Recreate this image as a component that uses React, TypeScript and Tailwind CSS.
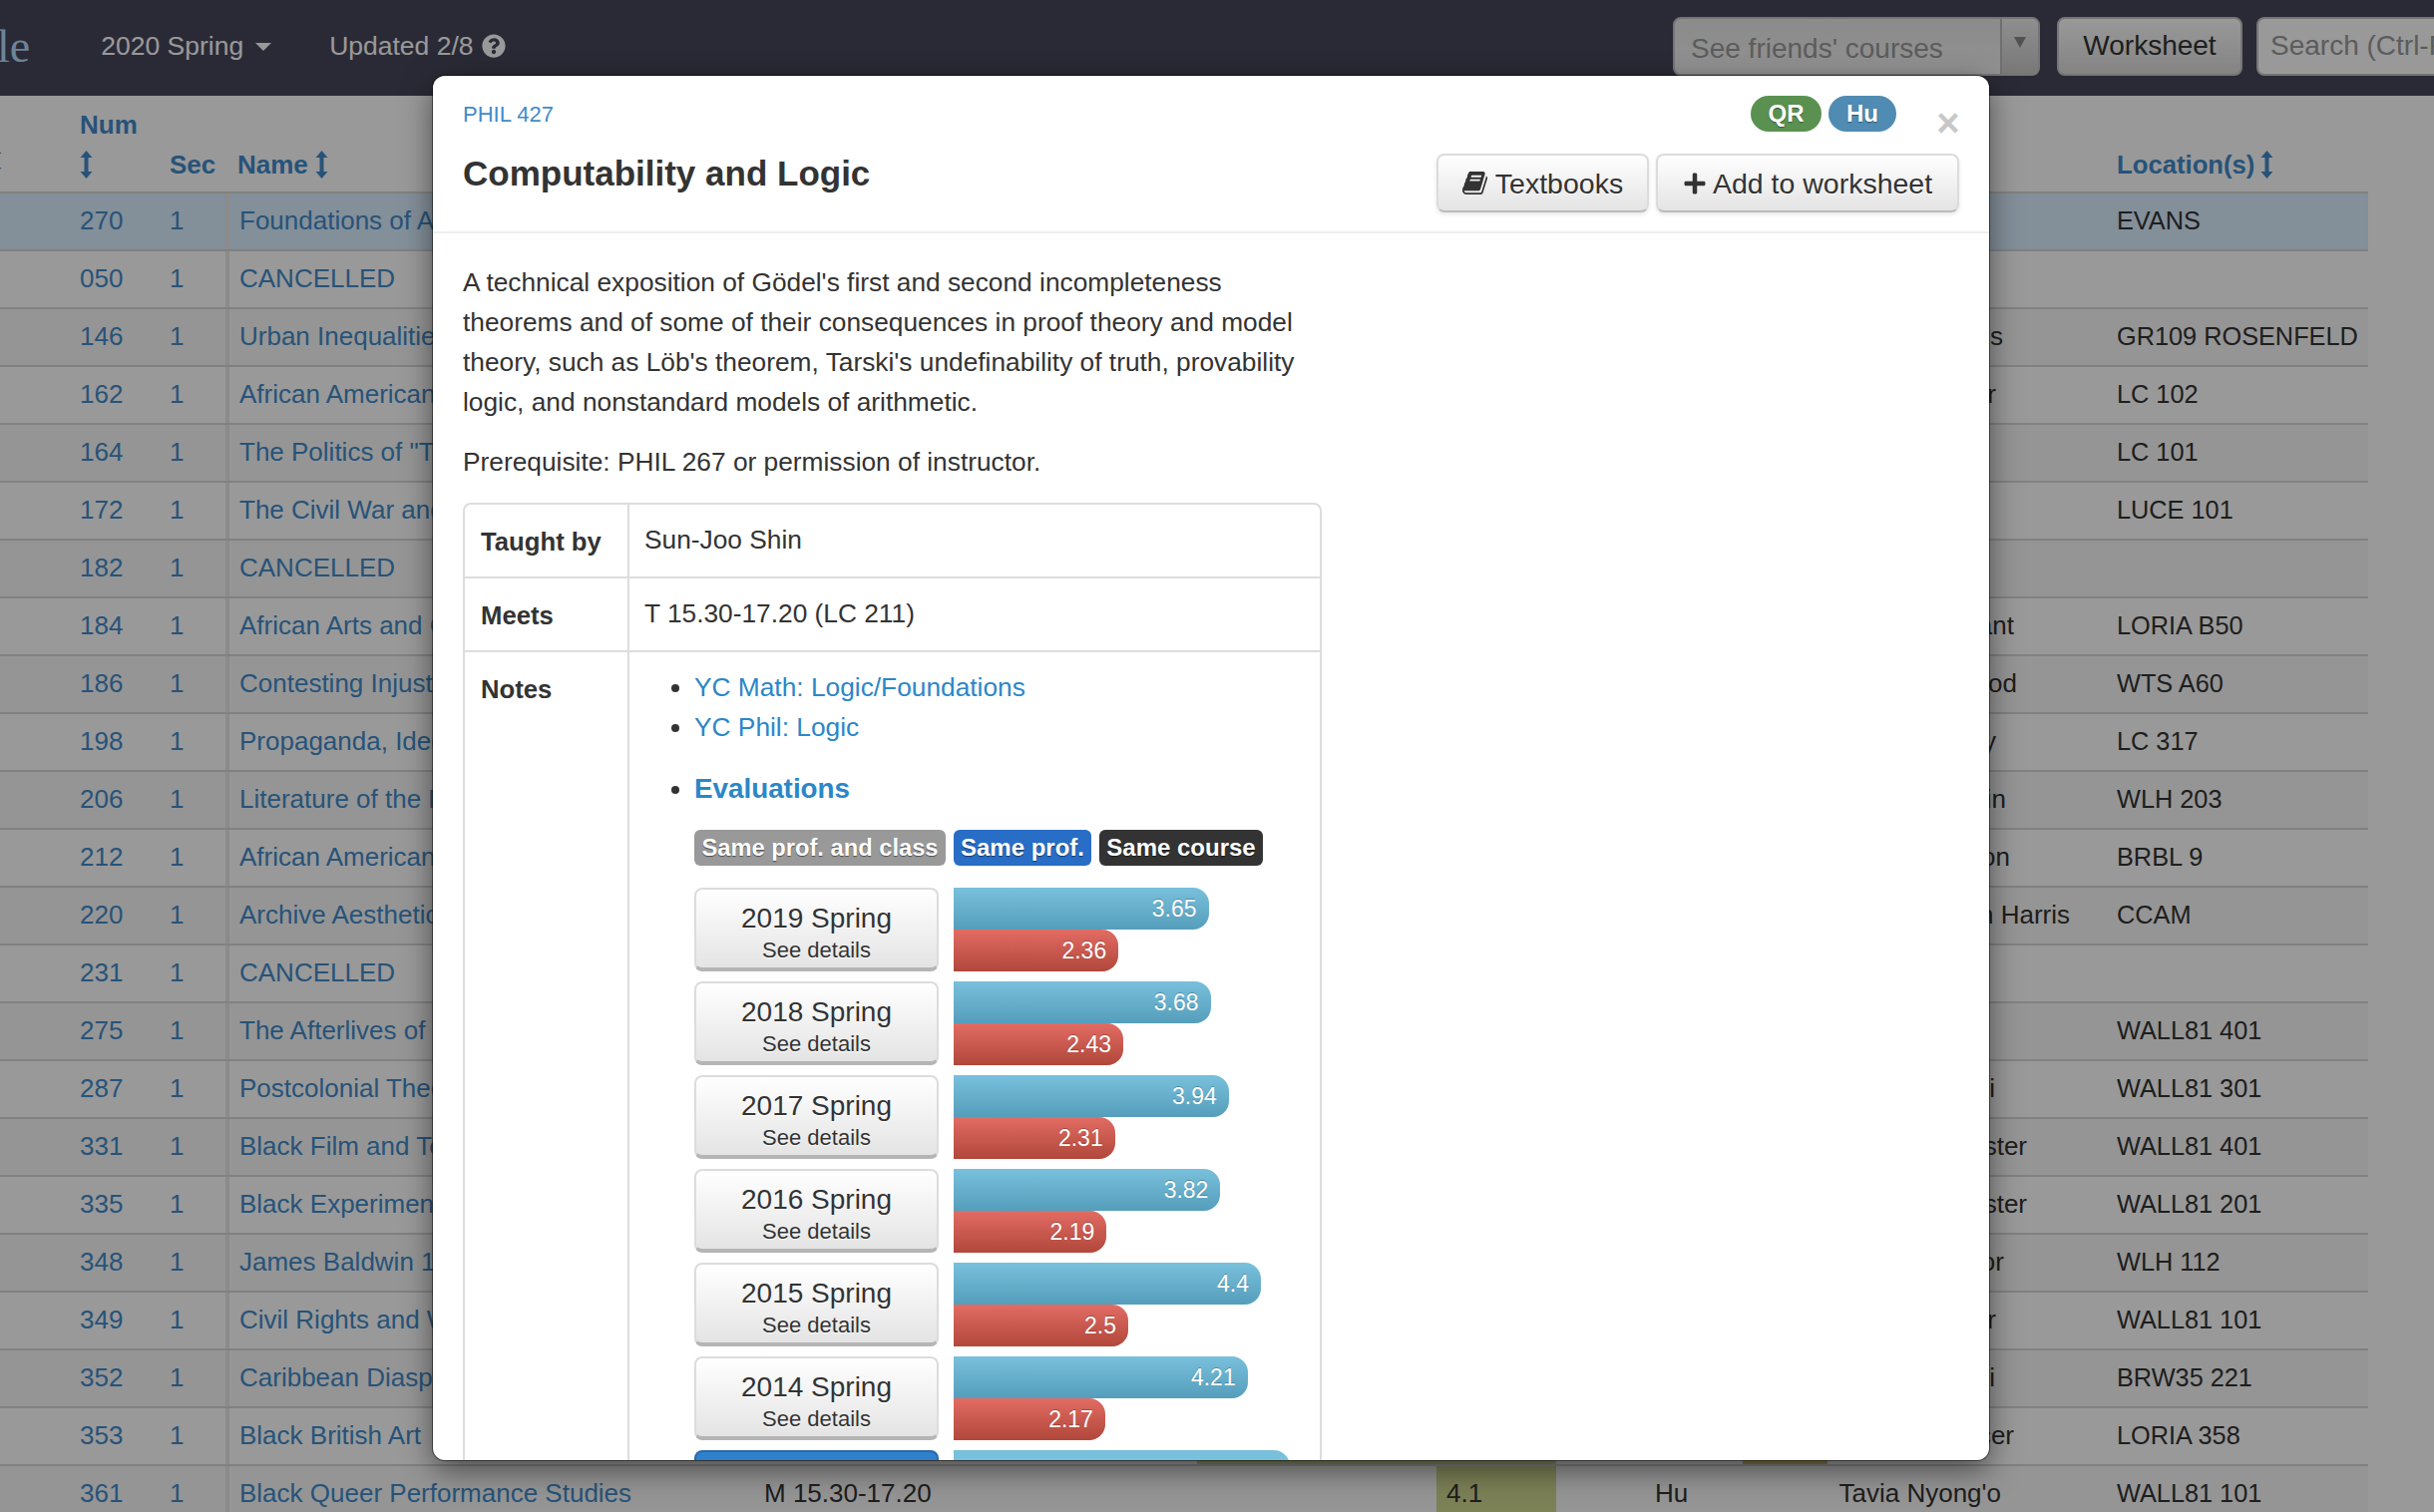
import React from 'react';
import { FaPlus, FaQuestionCircle } from 'react-icons/fa';

const rows: { num: string; name: string; prof?: string; end?: number; loc?: string; selected?: boolean }[] = [
  { num: '270', name: 'Foundations of African American Studies', loc: 'EVANS', selected: true },
  { num: '050', name: 'CANCELLED' },
  { num: '146', name: 'Urban Inequalities and Urban Schools', prof: 'Gerald Jaynes', end: 2008, loc: 'GR109 ROSENFELD' },
  { num: '162', name: 'African American History', prof: 'Aimee Miller', end: 2001, loc: 'LC 102' },
  { num: '164', name: 'The Politics of "The Wire"', loc: 'LC 101' },
  { num: '172', name: 'The Civil War and Reconstruction', loc: 'LUCE 101' },
  { num: '182', name: 'CANCELLED' },
  { num: '184', name: 'African Arts and Cultures', prof: 'Sarah Grant', end: 2019, loc: 'LORIA B50' },
  { num: '186', name: 'Contesting Injustice', prof: 'Marcus Wood', end: 2022, loc: 'WTS A60' },
  { num: '198', name: 'Propaganda, Ideology, and Democracy', prof: 'Jason Stanley', end: 2001, loc: 'LC 317' },
  { num: '206', name: 'Literature of the Black South', prof: 'Stephanie Martin', end: 2011, loc: 'WLH 203' },
  { num: '212', name: 'African American Poetry', prof: 'Elijah Anderson', end: 2015, loc: 'BRBL 9' },
  { num: '220', name: 'Archive Aesthetics and Community', prof: 'Carolyn Harris', end: 2075, loc: 'CCAM' },
  { num: '231', name: 'CANCELLED' },
  { num: '275', name: 'The Afterlives of Slavery', loc: 'WALL81 401' },
  { num: '287', name: 'Postcolonial Theory', prof: 'Nana Adjei', end: 2000, loc: 'WALL81 301' },
  { num: '331', name: 'Black Film and Television', prof: 'Nicholas Forster', end: 2032, loc: 'WALL81 401' },
  { num: '335', name: 'Black Experimental Film', prof: 'Nicholas Forster', end: 2032, loc: 'WALL81 201' },
  { num: '348', name: 'James Baldwin 1924-1987', prof: 'Aaron Taylor', end: 2009, loc: 'WLH 112' },
  { num: '349', name: 'Civil Rights and Women', prof: 'Crystal Feimster', end: 2001, loc: 'WALL81 101' },
  { num: '352', name: 'Caribbean Diaspora Literature', prof: 'Nana Adjei', end: 2000, loc: 'BRW35 221' },
  { num: '353', name: 'Black British Art', prof: 'Kobena Mercer', end: 2019, loc: 'LORIA 358' },
  { num: '361', name: 'Black Queer Performance Studies', prof: "Tavia Nyong'o", end: 2006, loc: 'WALL81 101' },
];

const evals = [
  { term: '2019 Spring', a: 3.65, b: 2.36 },
  { term: '2018 Spring', a: 3.68, b: 2.43 },
  { term: '2017 Spring', a: 3.94, b: 2.31 },
  { term: '2016 Spring', a: 3.82, b: 2.19 },
  { term: '2015 Spring', a: 4.4, b: 2.5 },
  { term: '2014 Spring', a: 4.21, b: 2.17 },
];

const GRID = 'grid grid-cols-[80px_90px_56px_540px_434px_240px_120px_99px_88px_85px_10px_280px_252px] w-[2374px]';

function SortIcon() {
  return (
    <svg width="13" height="28" viewBox="0 0 13 28" className="inline-block shrink-0 text-[#428bca]" fill="currentColor">
      <path d="M6.5 0 L12.5 7 H8.5 V21 H12.5 L6.5 28 L0.5 21 H4.5 V7 H0.5 Z" />
    </svg>
  );
}

function BookIcon() {
  return (
    <svg width="27" height="27" viewBox="0 0 1792 1792" fill="currentColor" className="shrink-0">
      <path d="M1639 478q40 57 18 129l-275 906q-19 64-76.5 107.5t-122.5 43.5h-923q-77 0-148.5-53.5t-99.5-131.5q-24-67-2-127 0-4 3-27t4-37q1-8-3-21.5t-3-19.5q2-11 8-21t16.5-23.5 16.5-23.5q23-38 45-91.5t30-91.5q3-10 .5-30t-.5-28q3-11 17-28t17-23q21-36 42-92t25-90q1-9-2.5-32t.5-28q4-13 22-30.5t22-22.5q19-26 42.5-84.5t27.5-96.5q1-8-3-25.5t-2-26.5q2-8 9-18t18-23 17-21q8-12 16.5-30.5t15-35 16-36 19.5-32 26.5-23.5 36-11.5 47.5 5.5l-1 3q38-9 51-9h761q74 0 114 56t18 130l-274 906q-36 119-71.5 153.5t-128.5 34.5h-869q-27 0-38 15-11 16-1 43 24 70 144 70h923q29 0 56-15.5t35-41.5l300-987q7-22 5-57 38 15 59 43zm-1064 2q-4 13 2 22.5t20 9.5h608q13 0 25.5-9.5t16.5-22.5l21-64q4-13-2-22.5t-20-9.5h-608q-13 0-25.5 9.5t-16.5 22.5zm-83 256q-4 13 2 22.5t20 9.5h608q13 0 25.5-9.5t16.5-22.5l21-64q4-13-2-22.5t-20-9.5h-608q-13 0-25.5 9.5t-16.5 22.5z" />
    </svg>
  );
}

function Row({ r, i }: { r: (typeof rows)[number]; i: number }) {
  const bg = r.selected ? 'bg-[#dbeeff]' : i % 2 === 0 ? 'bg-[#f9f9f9]' : 'bg-white';
  const cell = 'flex items-center whitespace-nowrap overflow-hidden pb-[2px]';
  const last = r.num === '361';
  return (
    <div className={`${GRID} ${bg} h-[58px] border-t-2 border-[#d8d8d8]`}>
      <div />
      <div className={`${cell} text-[#428bca]`}>{r.num}</div>
      <div className={`${cell} text-[#428bca]`}>1</div>
      <div className={`${cell} text-[#428bca] border-l-4 border-[#e8e8e8] pl-[10px]`}>{r.name}</div>
      <div className={cell}>{last ? 'M 15.30-17.20' : ''}</div>
      <div className={r.num === '353' ? 'bg-[#cfd78f]' : ''} />
      <div className={`${cell} pl-[10px] ${last || r.num === '353' ? 'bg-[#cfd78f]' : ''}`}>{last ? '4.1' : ''}</div>
      <div />
      <div className={cell}>{last ? 'Hu' : ''}</div>
      <div className={r.num === '353' ? 'bg-[#d9bf6a]' : ''} />
      <div />
      <div className={`${cell} overflow-visible`}>
        {r.prof && r.end ? (
          <span className="flex justify-end whitespace-nowrap" style={{ width: r.end - 1842 }}>
            {r.prof}
          </span>
        ) : null}
      </div>
      <div className={`${cell} text-[25.3px]`}>{r.loc ?? ''}</div>
    </div>
  );
}

function Btn({ children, className = '' }: { children: React.ReactNode; className?: string }) {
  return (
    <button
      className={`h-[59px] rounded-[8px] border-2 border-[#dcdcdc] border-b-[#bbbbbb] bg-gradient-to-b from-white to-[#e4e4e4] shadow-[0_2px_4px_rgba(0,0,0,0.1)] text-[#333] text-[28.5px] flex items-center justify-center gap-[6px] [text-shadow:0_1px_0_#fff] ${className}`}
    >
      {children}
    </button>
  );
}

function Bar({ v, color }: { v: number; color: string }) {
  return (
    <div
      className={`h-[42px] rounded-r-[16px] flex items-center justify-end pr-[12px] text-white text-[23px] [text-shadow:0_-1px_0_rgba(0,0,0,0.25)] ${color}`}
      style={{ width: v * 70 }}
    >
      {v}
    </div>
  );
}

export default function App() {
  return (
    <div className="relative h-[1516px] w-full overflow-hidden bg-white font-['Liberation_Sans',Arial,sans-serif] text-[26px] leading-[40px] text-[#333]">
      {/* Navbar */}
      <header className="h-[96px] bg-[#46465a] flex items-center text-white text-[26.5px] whitespace-nowrap">
        <span className="font-['Liberation_Serif',serif] text-[46px] text-[#b5dcff] -ml-[52px] mb-[2px]">Yale</span>
        <span className="ml-[71px] mb-[4px] flex items-center">
          2020 Spring
          <span className="ml-[12px] mt-[2px] w-0 h-0 border-x-[8px] border-x-transparent border-t-[8px] border-t-white" />
        </span>
        <span className="ml-[58px] mb-[4px] flex items-center gap-[8px]">
          Updated 2/8 <FaQuestionCircle className="text-[24px]" />
        </span>
        <div className="flex-1" />
        <div className="w-[368px] h-[59px] mt-[-4px] rounded-[8px] border-2 border-[#c4c4c4] bg-gradient-to-b from-[#e8e8e8] to-[#f2f2f2] flex overflow-hidden">
          <span className="flex-1 pl-[16px] pt-[10px] text-[28px] text-[#999]">See friends' courses</span>
          <span className="w-[38px] border-l-2 border-[#bbb] bg-gradient-to-b from-[#eee] to-[#c9c9c9] flex justify-center pt-[18px]">
            <span className="w-0 h-0 border-x-[6px] border-x-transparent border-t-[11px] border-t-[#888]" />
          </span>
        </div>
        <button className="ml-[17px] w-[186px] h-[59px] mt-[-4px] rounded-[8px] border-2 border-[#c4c4c4] bg-gradient-to-b from-white to-[#dcdcdc] text-[#333] text-[28px]">
          Worksheet
        </button>
        <div className="ml-[14px] w-[178px] shrink-0 h-[59px] mt-[-4px] rounded-l-[8px] border-2 border-r-0 border-[#c4c4c4] bg-white pl-[12px] pt-[7px] text-[28px] text-[#999] overflow-hidden">
          Search (Ctrl-F)
        </div>
      </header>

      {/* Table head */}
      <div className={`${GRID} h-[96px] items-end font-bold text-[#428bca] pb-[7px]`}>
        <div className="-ml-[11px] pb-[6px]"><SortIcon /></div>
        <div className="flex flex-col leading-[40px]">
          <span>Num</span>
          <span className="h-[40px] flex items-center"><SortIcon /></span>
        </div>
        <div>Sec</div>
        <div className="pl-[12px] flex items-center gap-[7px]">Name <SortIcon /></div>
        <div /><div /><div /><div /><div /><div /><div /><div />
        <div className="flex items-center gap-[6px] text-[25.7px]">Location(s) <SortIcon /></div>
      </div>

      {/* Table body */}
      {rows.map((r, i) => (
        <Row key={r.num} r={r} i={i} />
      ))}

      {/* Backdrop */}
      <div className="absolute inset-0 bg-black/40" />

      {/* Modal */}
      <div className="absolute left-[434px] top-[76px] w-[1560px] h-[1388px] rounded-[12px] bg-white overflow-hidden flex flex-col shadow-[0_0_0_1px_rgba(0,0,0,0.5),0_10px_30px_rgba(0,0,0,0.5)]">
        <div className="h-[158px] shrink-0 border-b-2 border-[#eeeeee] flex justify-between pl-[30px] pr-[30px]">
          <div className="flex flex-col">
            <div className="mt-[19px] text-[22px] text-[#428bca]">PHIL 427</div>
            <h1 className="mt-[19px] text-[35px] font-bold text-[#333]">Computability and Logic</h1>
          </div>
          <div className="flex flex-col items-end">
            <div className="flex mt-[20px] h-[36px] items-center -mr-[2px]">
              <span className="w-[71px] h-[36px] rounded-full bg-[#5a9150] text-white font-bold text-[24px] flex items-center justify-center [text-shadow:0_1px_1px_rgba(0,0,0,0.4)]">QR</span>
              <span className="ml-[7px] w-[68px] h-[36px] rounded-full bg-[#4f8bb3] text-white font-bold text-[24px] flex items-center justify-center [text-shadow:0_1px_1px_rgba(0,0,0,0.4)]">Hu</span>
              <span className="ml-[39px] mt-[18px] w-[26px] text-[#c8c8c8] font-bold text-[40px] leading-none text-center">×</span>
            </div>
            <div className="flex gap-[7px] mt-[22px]">
              <Btn className="w-[213px]"><BookIcon /> Textbooks</Btn>
              <Btn className="w-[304px]"><FaPlus className="text-[24px]" /> Add to worksheet</Btn>
            </div>
          </div>
        </div>

        <div className="flex-1 min-h-0 overflow-hidden pl-[30px] pt-[29px] text-[26.3px]">
          <p className="whitespace-nowrap">
            A technical exposition of Gödel's first and second incompleteness<br />
            theorems and of some of their consequences in proof theory and model<br />
            theory, such as Löb's theorem, Tarski's undefinability of truth, provability<br />
            logic, and nonstandard models of arithmetic.
          </p>
          <p className="mt-[20px]">Prerequisite: PHIL 267 or permission of instructor.</p>

          <div className="mt-[21px] w-[861px] rounded-[8px] border-2 border-[#dddddd]">
            <div className="flex h-[74px] border-b-2 border-[#dddddd]">
              <div className="w-[165px] border-r-2 border-[#dddddd] pl-[16px] pt-[17px] text-[25.7px] font-bold">Taught by</div>
              <div className="pl-[15px] pt-[15px]">Sun-Joo Shin</div>
            </div>
            <div className="flex h-[74px] border-b-2 border-[#dddddd]">
              <div className="w-[165px] border-r-2 border-[#dddddd] pl-[16px] pt-[17px] text-[25.7px] font-bold">Meets</div>
              <div className="pl-[15px] pt-[15px]">T 15.30-17.20 (LC 211)</div>
            </div>
            <div className="flex">
              <div className="w-[165px] shrink-0 border-r-2 border-[#dddddd] pl-[16px] pt-[17px] text-[25.7px] font-bold">Notes</div>
              <ul className="list-disc pl-[65px] pt-[15px]">
                <li><span className="text-[#2b87c8]">YC Math: Logic/Foundations</span></li>
                <li><span className="text-[#2b87c8]">YC Phil: Logic</span></li>
                <li className="mt-[22px]">
                  <span className="text-[27.8px] font-bold text-[#2b87c8]">Evaluations</span>
                  <div className="mt-[21px] flex gap-[8px] font-bold text-white text-[24px] leading-[36px] [text-shadow:0_1px_1px_rgba(0,0,0,0.5)]">
                    <span className="w-[252px] rounded-[6px] bg-[#999999] text-center text-[23.7px]">Same prof. and class</span>
                    <span className="w-[138px] rounded-[6px] bg-[#286dc6] text-center">Same prof.</span>
                    <span className="w-[164px] rounded-[6px] bg-[#333333] text-center">Same course</span>
                  </div>
                  <div className="mt-[22px] flex flex-col gap-[10px] w-[620px]">
                    {evals.map((e) => (
                      <div key={e.term} className="flex gap-[15px]">
                        <button className="w-[245px] h-[84px] shrink-0 rounded-[8px] border-2 border-[#dcdcdc] border-b-[4px] border-b-[#b5b5b5] bg-gradient-to-b from-white to-[#e4e4e4] flex flex-col items-center text-[#333] [text-shadow:0_1px_0_#fff]">
                          <span className="mt-[9px] text-[28px] leading-[40px]">{e.term}</span>
                          <span className="-mt-[4px] text-[22px] leading-[32px]">See details</span>
                        </button>
                        <div className="flex flex-col">
                          <Bar v={e.a} color="bg-gradient-to-b from-[#78c0dc] to-[#559ebb]" />
                          <Bar v={e.b} color="bg-gradient-to-b from-[#e26c63] to-[#b1473b]" />
                        </div>
                      </div>
                    ))}
                    <div className="flex gap-[15px]">
                      <div className="w-[245px] h-[84px] shrink-0 rounded-[8px] border-2 border-[#2a69ad] bg-[#3180cc]" />
                      <div className="w-[337px] h-[42px] rounded-r-[16px] bg-[#78c0dc]" />
                    </div>
                  </div>
                </li>
              </ul>
            </div>
          </div>
        </div>
      </div>
    </div>
  );
}
